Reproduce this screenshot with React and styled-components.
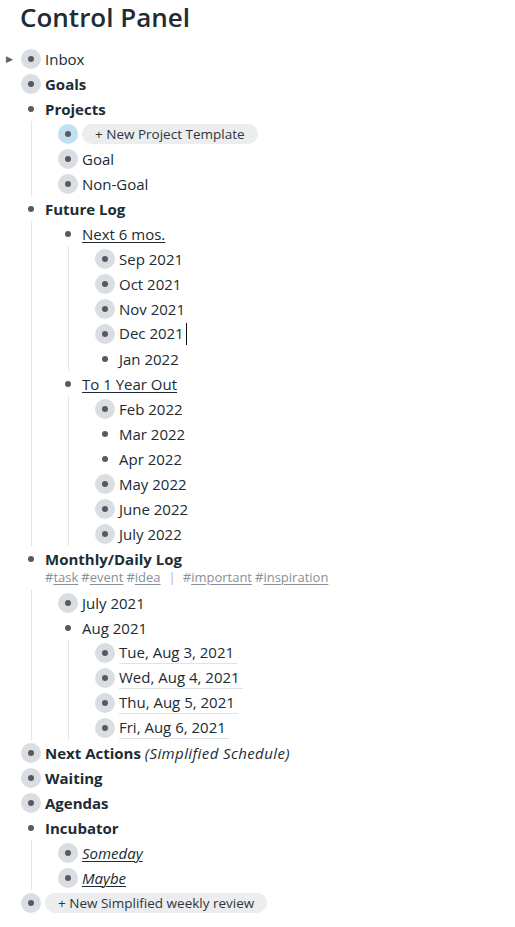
import React from 'react';
import styled, { createGlobalStyle } from 'styled-components';

const GlobalStyle = createGlobalStyle`
  body {
    margin: 0;
    background: #fff;
    font-family: "Open Sans", "Noto Sans", sans-serif;
    color: #202b33;
  }
`;

const Page = styled.div`
  padding: 0 0 0 5px;
`;

const Title = styled.h1`
  margin: 0 0 12px 15px;
  font-size: 26px;
  font-weight: 600;
  line-height: 34px;
  color: #202b33;
`;

const Row = styled.div`
  display: flex;
  align-items: center;
  height: 25px;
`;

const CaretSlot = styled.div`
  width: 16px;
  height: 25px;
  display: flex;
  align-items: center;
  padding-left: 1px;
  box-sizing: border-box;
  color: #5c6166;
  font-size: 9px;
`;

const Bullet = styled.div`
  width: 20px;
  height: 20px;
  border-radius: 50%;
  flex-shrink: 0;
  display: flex;
  align-items: center;
  justify-content: center;
  margin-right: 4px;
  background: ${p => (p.$active ? '#c2e0f4' : p.$collapsed ? '#dadde1' : 'transparent')};

  &::after {
    content: '';
    width: 6px;
    height: 6px;
    border-radius: 50%;
    background: #565b61;
  }
`;

const Text = styled.span`
  font-size: 15px;
  line-height: 22px;
  white-space: nowrap;
  font-weight: ${p => (p.$bold ? 700 : 400)};
  font-style: ${p => (p.$italic ? 'italic' : 'normal')};
  text-decoration: ${p => (p.$link ? 'underline' : 'none')};
  text-underline-offset: 2px;
  text-decoration-thickness: 1px;
`;

const Note = styled.span`
  font-style: italic;
  font-weight: 400;
  letter-spacing: 0.4px;
`;

const DateText = styled.span`
  display: inline-block;
  font-size: 15px;
  line-height: 22px;
  padding-right: 3px;
  border-bottom: 1px solid #dfe2e5;
`;

const Cursor = styled.span`
  display: inline-block;
  width: 1px;
  height: 22px;
  margin-left: 2px;
  vertical-align: middle;
  background: #111;
`;

const PillButton = styled.span`
  display: inline-flex;
  align-items: center;
  height: 20px;
  padding: 0 13px;
  border-radius: 10px;
  background: #ebedef;
  font-size: 13.5px;
  color: #30363b;
  white-space: nowrap;
`;

const Children = styled.div`
  margin-left: 26px;
  padding-left: 10px;
  border-left: 1px solid #e3e5e8;
`;

const TagLine = styled.div`
  margin-left: 40px;
  margin-top: -6px;
  padding: 4px 0 5px;
  font-size: 13px;
  line-height: 16px;
  color: #8a8f95;
  white-space: nowrap;
`;

const Tag = styled.span`
  margin-right: 3px;

  & > u {
    text-underline-offset: 2px;
  }
`;

const Pipe = styled.span`
  margin: 0 7px 0 5px;
  color: #b0b4b8;
`;

const tags = ['task', 'event', 'idea'];
const tags2 = ['important', 'inspiration'];

const tree = [
  { text: 'Inbox', collapsed: true, caret: true },
  { text: 'Goals', bold: true, collapsed: true },
  {
    text: 'Projects', bold: true, children: [
      { button: '+ New Project Template', collapsed: true, active: true },
      { text: 'Goal', collapsed: true },
      { text: 'Non-Goal', collapsed: true },
    ],
  },
  {
    text: 'Future Log', bold: true, children: [
      {
        text: 'Next 6 mos.', link: true, children: [
          { text: 'Sep 2021', collapsed: true },
          { text: 'Oct 2021', collapsed: true },
          { text: 'Nov 2021', collapsed: true },
          { text: 'Dec 2021', collapsed: true, cursor: true },
          { text: 'Jan 2022' },
        ],
      },
      {
        text: 'To 1 Year Out', link: true, children: [
          { text: 'Feb 2022', collapsed: true },
          { text: 'Mar 2022' },
          { text: 'Apr 2022' },
          { text: 'May 2022', collapsed: true },
          { text: 'June 2022', collapsed: true },
          { text: 'July 2022', collapsed: true },
        ],
      },
    ],
  },
  {
    text: 'Monthly/Daily Log', bold: true, tags: true, children: [
      { text: 'July 2021', collapsed: true },
      {
        text: 'Aug 2021', children: [
          { date: 'Tue, Aug 3, 2021', collapsed: true },
          { date: 'Wed, Aug 4, 2021', collapsed: true },
          { date: 'Thu, Aug 5, 2021', collapsed: true },
          { date: 'Fri, Aug 6, 2021', collapsed: true },
        ],
      },
    ],
  },
  { text: 'Next Actions', note: '(Simplified Schedule)', bold: true, collapsed: true },
  { text: 'Waiting', bold: true, collapsed: true },
  { text: 'Agendas', bold: true, collapsed: true },
  {
    text: 'Incubator', bold: true, children: [
      { text: 'Someday', italic: true, link: true, collapsed: true },
      { text: 'Maybe', italic: true, link: true, collapsed: true },
    ],
  },
  { button: '+ New Simplified weekly review', collapsed: true },
];

function Content({ item }) {
  if (item.button) return <PillButton>{item.button}</PillButton>;
  if (item.date) return <DateText>{item.date}</DateText>;
  return (
    <Text $bold={item.bold} $italic={item.italic} $link={item.link}>
      {item.text}
      {item.note && <> <Note>{item.note}</Note></>}
      {item.cursor && <Cursor />}
    </Text>
  );
}

function Block({ item }) {
  return (
    <div>
      <Row>
        <CaretSlot>{item.caret ? '▶' : null}</CaretSlot>
        <Bullet $collapsed={item.collapsed} $active={item.active} />
        <Content item={item} />
      </Row>
      {item.tags && (
        <TagLine>
          {tags.map(t => <Tag key={t}>#<u>{t}</u></Tag>)}
          <Pipe>|</Pipe>
          {tags2.map(t => <Tag key={t}>#<u>{t}</u></Tag>)}
        </TagLine>
      )}
      {item.children && (
        <Children>
          {item.children.map((c, i) => <Block key={i} item={c} />)}
        </Children>
      )}
    </div>
  );
}

export default function App() {
  return (
    <>
      <GlobalStyle />
      <Page>
        <Title>Control Panel</Title>
        {tree.map((item, i) => <Block key={i} item={item} />)}
      </Page>
    </>
  );
}
